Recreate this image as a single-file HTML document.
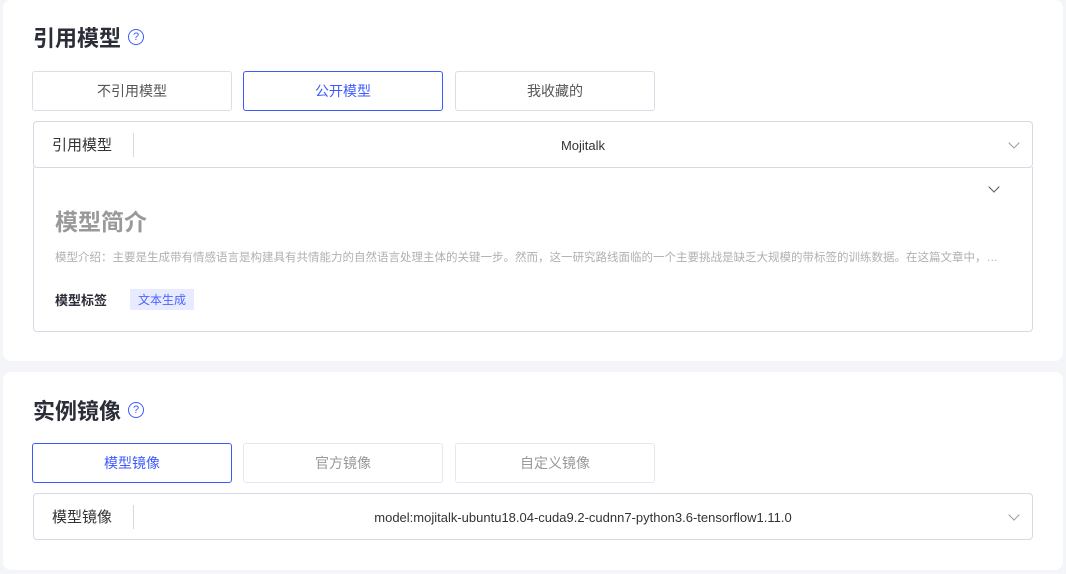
<!DOCTYPE html>
<html><head><meta charset="utf-8"><style>
*{box-sizing:border-box;margin:0;padding:0}
body{width:1066px;height:574px;background:#f4f5f9;font-family:"Liberation Sans","Noto Sans CJK SC",sans-serif;position:relative;overflow:hidden;color:#333}
.card{position:absolute;left:3px;width:1060px;background:#fff;border-radius:8px}
.h{position:absolute;left:30px;font-size:22px;font-weight:bold;color:#2b2d38;display:flex;align-items:center}
.q{width:16px;height:16px;border:1.3px solid #3d5afe;border-radius:50%;color:#3d5afe;font-size:11px;font-weight:normal;display:inline-flex;align-items:center;justify-content:center;margin-left:7px}
.btn{position:absolute;width:200px;height:40px;border:1px solid #dcdde6;border-radius:3px;font-size:14px;color:#555;display:flex;align-items:center;justify-content:center;background:#fff}
.btn.a{border-color:#3d5afe;color:#3d5afe}
.btn.d{color:#999;border-color:#e6e7ee}
.sel{position:absolute;left:30px;width:1000px;height:47px;border:1px solid #d6d8e4;border-radius:4px;font-size:14px}
.sel .l{position:absolute;left:18px;top:12px;font-size:15px;color:#333}
.sel .bar{position:absolute;left:99px;top:11px;width:1px;height:24px;background:#d6d8e4}
.sel .v{position:absolute;left:100px;right:0;top:16px;text-align:center;font-size:13px;color:#333}
.chev{position:absolute;width:8px;height:8px;border-right:1.2px solid #999;border-bottom:1.2px solid #999;transform:rotate(45deg)}
</style></head><body>
<div class="card" style="top:0;height:361px">
  <div class="h" style="top:21px">引用模型<span class="q">?</span></div>
  <div class="btn" style="left:29px;top:71px">不引用模型</div>
  <div class="btn a" style="left:240px;top:71px">公开模型</div>
  <div class="btn" style="left:452px;top:71px">我收藏的</div>
  <div class="sel" style="top:121px"><span class="l">引用模型</span><span class="bar"></span><span class="v">Mojitalk</span><span class="chev" style="right:14px;top:17px"></span></div>
  <div style="position:absolute;left:30px;top:167px;width:1000px;height:165px;border:1px solid #d6d8e4;border-top:none;border-radius:0 0 4px 4px">
    <span class="chev" style="right:34px;top:16px;border-color:#555"></span>
    <div style="position:absolute;left:21px;top:36px;font-size:23px;font-weight:bold;color:#999">模型简介</div>
    <div style="position:absolute;left:21px;top:82px;width:950px;font-size:11.5px;color:#b0b0b0;white-space:nowrap;overflow:hidden;text-overflow:ellipsis">模型介绍：主要是生成带有情感语言是构建具有共情能力的自然语言处理主体的关键一步。然而，这一研究路线面临的一个主要挑战是缺乏大规模的带标签的训练数据。在这篇文章中，我们利用推特数据自动构建大规模数据集</div>
    <div style="position:absolute;left:21px;top:123px;font-size:13px;font-weight:bold;color:#2b2d38">模型标签</div>
    <div style="position:absolute;left:96px;top:122px;width:64px;height:21px;background:#e8ebff;color:#4a63ff;font-size:12px;display:flex;align-items:center;justify-content:center">文本生成</div>
  </div>
</div>
<div class="card" style="top:372px;height:198px">
  <div class="h" style="top:22px">实例镜像<span class="q">?</span></div>
  <div class="btn a" style="left:29px;top:71px">模型镜像</div>
  <div class="btn d" style="left:240px;top:71px">官方镜像</div>
  <div class="btn d" style="left:452px;top:71px">自定义镜像</div>
  <div class="sel" style="top:121px"><span class="l">模型镜像</span><span class="bar"></span><span class="v">model:mojitalk-ubuntu18.04-cuda9.2-cudnn7-python3.6-tensorflow1.11.0</span><span class="chev" style="right:14px;top:17px"></span></div>
</div>
</body></html>
